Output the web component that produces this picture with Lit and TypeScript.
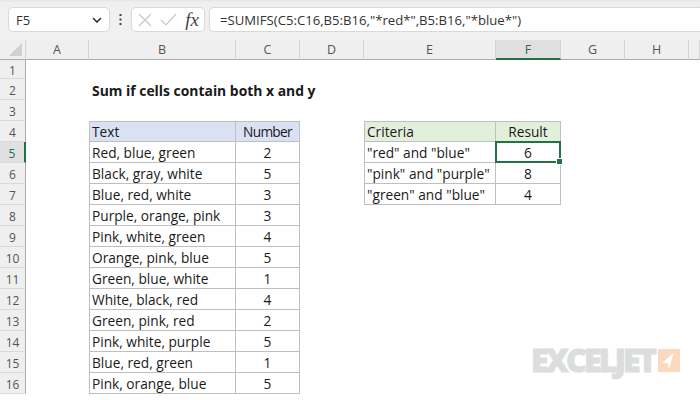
import { LitElement, html, css } from "lit";
import { customElement } from "lit/decorators.js";

const COLS = ["A", "B", "C", "D", "E", "F", "G", "H", ""];
const LEFT: [string, number][] = [
  ["Red, blue, green", 2], ["Black, gray, white", 5], ["Blue, red, white", 3],
  ["Purple, orange, pink", 3], ["Pink, white, green", 4], ["Orange, pink, blue", 5],
  ["Green, blue, white", 1], ["White, black, red", 4], ["Green, pink, red", 2],
  ["Pink, white, purple", 5], ["Blue, red, green", 1], ["Pink, orange, blue", 5],
];
const RIGHT: [string, number][] = [
  ['"red" and "blue"', 6], ['"pink" and "purple"', 8], ['"green" and "blue"', 4],
];

@customElement("app-root")
export class AppRoot extends LitElement {
  static styles = css`
    :host { display: block; width: 700px; height: 400px; overflow: hidden; background: #fff; position: relative;
      font-family: "Open Sans", "Liberation Sans", sans-serif; color: #1a1a1a; }
    .bar { height: 40px; box-sizing: border-box; background: linear-gradient(#e6e6e6, #f0f0f0 3px); padding: 7px 0 8px 8px; display: flex; align-items: stretch; }
    .box { background: #fff; border: 1px solid #d9d9d9; border-radius: 5px; box-sizing: border-box; display: flex; align-items: center; }
    .name { width: 102px; padding: 0 7px; justify-content: space-between; font-size: 13px; color: #333; }
    .dots { width: 20px; display: flex; align-items: center; justify-content: center; }
    .fxbox { width: 74px; padding: 0 5px 0 6px; justify-content: space-between; margin-left: 1px; }
    .formula { flex: 1; margin-left: 4px; border-right: none; border-radius: 5px 0 0 5px; padding-left: 10px; font-size: 13.15px; color: #333; white-space: nowrap; }
    .fx { font-family: "Liberation Serif", serif; font-style: italic; font-size: 19px; line-height: 20px; color: #444; }

    .sheet { display: grid; grid-template-columns: 26px 63px 147px 64px 64px 132px 65px 64px 64px 11px;
      grid-template-rows: 20px 19px 21px 21px repeat(13, 21px); }
    .ch, .rh { background: #efefef; color: #555; display: flex; align-items: center; justify-content: center; box-sizing: border-box; }
    .ch { font-size: 12.5px; border-bottom: 1px solid #ababab; border-right: 1px solid #d4d4d4; }
    .rh { font-size: 12px; border-right: 1px solid #ababab; border-bottom: 1px solid #d9d9d9; padding-top: 2px; }
    .corner { position: relative; }
    .corner svg { display: block; position: absolute; right: 3px; bottom: 3px; }
    .ch.sel { background: #e0e0e0; color: #217346; border-bottom: 2px solid #217346; }
    .rh.sel { background: #e0e0e0; color: #217346; border-right: 2px solid #217346; }

    .c { box-sizing: border-box; font-size: 13.7px; line-height: 20px; white-space: nowrap; padding: 1px 2px 0; display: flex; align-items: center; min-width: 0; }
    .title { font-weight: 700; font-size: 13.9px; padding: 3px 0 0 3px; }
    .narrow { letter-spacing: -0.7px; }
    .t { border-right: 1px solid #bfbfbf; border-bottom: 1px solid #bfbfbf; }
    .l { border-left: 1px solid #bfbfbf; }
    .top { border-top: 1px solid #bfbfbf; }
    .ctr { justify-content: center; }
    .blue { background: #d9e1f2; }
    .green { background: #e2efda; }
    .active { position: relative; }
    .active::after { content: ""; position: absolute; left: -1px; top: -1px; right: -1px; bottom: -1px; border: 2px solid #217346; }
    .handle { position: absolute; right: -3px; bottom: -3px; width: 5px; height: 5px; background: #217346; border: 1px solid #fff; z-index: 2; }

    .logo { position: absolute; left: 531px; top: 345px; display: flex; align-items: flex-start; }
    .logo span { font-family: "Open Sans", sans-serif; font-weight: 800; font-size: 32px; letter-spacing: -2.8px; color: #dcdddd; -webkit-text-stroke: 0.9px #dcdddd; line-height: 30px; width: 127px; white-space: nowrap; }
    .logo svg { display: block; margin-top: 4px; }
  `;

  private cell(r: number, c: number) {
    if (r === 2 && c === 1) return html`<div class="c title">Sum if cells contain both x and y</div>`;
    if (r === 4 && c === 1) return html`<div class="c t l top blue">Text</div>`;
    if (r === 4 && c === 2) return html`<div class="c t top blue ctr narrow">Number</div>`;
    if (r >= 5 && r <= 16 && c === 1) return html`<div class="c t l">${LEFT[r - 5][0]}</div>`;
    if (r >= 5 && r <= 16 && c === 2) return html`<div class="c t ctr">${LEFT[r - 5][1]}</div>`;
    if (r === 4 && c === 4) return html`<div class="c t l top green">Criteria</div>`;
    if (r === 4 && c === 5) return html`<div class="c t top green ctr">Result</div>`;
    if (r >= 5 && r <= 7 && c === 4) return html`<div class="c t l">${RIGHT[r - 5][0]}</div>`;
    if (r >= 5 && r <= 7 && c === 5)
      return html`<div class="c t ctr ${r === 5 ? "active" : ""}">${RIGHT[r - 5][1]}${r === 5 ? html`<i class="handle"></i>` : ""}</div>`;
    return html`<div></div>`;
  }

  render() {
    const rows = Array.from({ length: 16 }, (_, i) => i + 1);
    return html`
      <div class="bar">
        <div class="box name"><span>F5</span>
          <svg width="10" height="6" viewBox="0 0 10 6"><path d="M1 1l4 4 4-4" fill="none" stroke="#333" stroke-width="1.6"/></svg>
        </div>
        <div class="dots"><svg width="3" height="11" viewBox="0 0 3 11"><g fill="#444"><rect x="0.5" y="0" width="2" height="2"/><rect x="0.5" y="4.5" width="2" height="2"/><rect x="0.5" y="9" width="2" height="2"/></g></svg></div>
        <div class="box fxbox">
          <svg width="14" height="14" viewBox="0 0 14 14"><path d="M1 1l12 12M13 1L1 13" fill="none" stroke="#c8c8c8" stroke-width="1.2"/></svg>
          <svg width="17" height="13" viewBox="0 0 17 13"><path d="M1 7l5 5L16 1" fill="none" stroke="#c8c8c8" stroke-width="1.2"/></svg>
          <span class="fx">fx</span>
        </div>
        <div class="box formula">=SUMIFS(C5:C16,B5:B16,"*red*",B5:B16,"*blue*")</div>
      </div>
      <div class="sheet">
        <div class="ch corner"><svg width="13" height="13" viewBox="0 0 13 13"><path d="M13 0v13H0z" fill="#d0d0d0"/></svg></div>
        ${COLS.map((n) => html`<div class="ch ${n === "F" ? "sel" : ""}">${n}</div>`)}
        ${rows.map((r) => html`
          <div class="rh ${r === 5 ? "sel" : ""}">${r}</div>
          ${COLS.map((_, c) => this.cell(r, c))}
        `)}
      </div>
      <div class="logo">
        <span>EXCELJET</span>
        <svg width="22" height="23" viewBox="0 0 22 23"><rect width="22" height="23" fill="#fad9bf"/><path d="M15.5 4L4 14l6 .5L11 20z" fill="#fff"/></svg>
      </div>
    `;
  }
}
